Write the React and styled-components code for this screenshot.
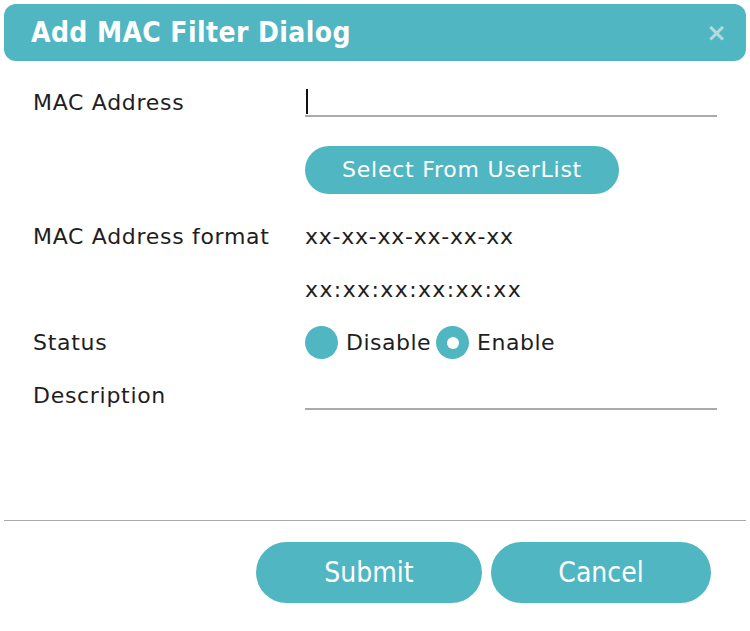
import styled, { createGlobalStyle } from "styled-components";

const teal = "#4fb6c2";

const GlobalStyle = createGlobalStyle`
  html, body {
    margin: 0;
    padding: 0;
    background: #ffffff;
  }
  body {
    font-family: "DejaVu Sans", Verdana, sans-serif;
    color: #1e1e1e;
  }
`;

const Dialog = styled.div`
  width: 750px;
  height: 631px;
  box-sizing: border-box;
  background: #fff;
  border-radius: 14px;
  display: flex;
  flex-direction: column;
  padding: 4px 4px 0;
  overflow: hidden;
`;

const Header = styled.div`
  height: 57px;
  background: ${teal};
  border-radius: 12px;
  display: flex;
  align-items: center;
  justify-content: space-between;
  padding: 0 19px 0 27px;
`;

const Title = styled.h1`
  margin: 0;
  font-family: "DejaVu Sans Condensed", "DejaVu Sans", sans-serif;
  font-weight: 700;
  font-size: 28px;
  color: #fff;
  letter-spacing: 0.4px;
`;

const Close = styled.span`
  font-family: "DejaVu Sans", sans-serif;
  font-weight: 700;
  font-size: 25px;
  color: #b4d9de;
  line-height: 1;
`;

const Form = styled.div`
  padding: 15px 29px 0;
  display: flex;
  flex-direction: column;
  flex: 1;
`;

const Row = styled.div`
  display: flex;
  align-items: center;
  height: ${(p) => p.$h || 53}px;
`;

const Label = styled.div`
  width: 272px;
  flex: none;
  font-size: 22px;
  letter-spacing: 0.7px;
`;

const Value = styled.div`
  flex: 1;
  font-size: 22px;
  letter-spacing: ${(p) => p.$ls || 0.75}px;
  display: flex;
  align-items: center;
`;

const Input = styled.div`
  flex: 1;
  height: 26px;
  border-bottom: 2px solid #aaa;
  position: relative;
`;

const Caret = styled.span`
  position: absolute;
  left: 1px;
  top: 0;
  width: 2px;
  height: 25px;
  background: #111;
`;

const PillButton = styled.button`
  border: none;
  background: ${teal};
  color: #fff;
  border-radius: 31px;
  font-family: ${(p) =>
    p.$condensed
      ? `"DejaVu Sans Condensed", "DejaVu Sans", sans-serif`
      : `"DejaVu Sans", sans-serif`};
  font-size: ${(p) => p.$fs || 22}px;
  letter-spacing: ${(p) => (p.$condensed ? 0 : 0.75)}px;
  width: ${(p) => p.$w}px;
  height: ${(p) => p.$h}px;
  padding: 0;
  cursor: pointer;
`;

const Radio = styled.span`
  width: 33px;
  height: 33px;
  border-radius: 50%;
  background: ${teal};
  display: inline-flex;
  align-items: center;
  justify-content: center;
  margin-right: 8px;
  &::after {
    content: "";
    display: ${(p) => (p.$checked ? "block" : "none")};
    width: 12px;
    height: 12px;
    border-radius: 50%;
    background: #fff;
  }
`;

const RadioLabel = styled.span`
  margin-right: 5px;
  letter-spacing: 0.5px;
`;

const Divider = styled.div`
  height: 1px;
  background: #aaa;
`;

const Footer = styled.div`
  display: flex;
  justify-content: flex-end;
  gap: 9px;
  padding: 21px 35px 0 0;
  height: 110px;
  box-sizing: border-box;
`;

export default function App() {
  return (
    <>
      <GlobalStyle />
      <Dialog>
        <Header>
          <Title>Add MAC Filter Dialog</Title>
          <Close>×</Close>
        </Header>
        <Form>
          <Row>
            <Label>MAC Address</Label>
            <Input>
              <Caret />
            </Input>
          </Row>
          <Row $h={81}>
            <Label />
            <PillButton $w={314} $h={48}>
              Select From UserList
            </PillButton>
          </Row>
          <Row>
            <Label>MAC Address format</Label>
            <Value>xx-xx-xx-xx-xx-xx</Value>
          </Row>
          <Row>
            <Label />
            <Value $ls={1.4}>xx:xx:xx:xx:xx:xx</Value>
          </Row>
          <Row>
            <Label>Status</Label>
            <Value>
              <Radio />
              <RadioLabel>Disable</RadioLabel>
              <Radio $checked />
              <RadioLabel>Enable</RadioLabel>
            </Value>
          </Row>
          <Row>
            <Label>Description</Label>
            <Input />
          </Row>
        </Form>
        <Divider />
        <Footer>
          <PillButton $condensed $w={226} $h={61} $fs={28}>
            Submit
          </PillButton>
          <PillButton $condensed $w={220} $h={61} $fs={28}>
            Cancel
          </PillButton>
        </Footer>
      </Dialog>
    </>
  );
}
